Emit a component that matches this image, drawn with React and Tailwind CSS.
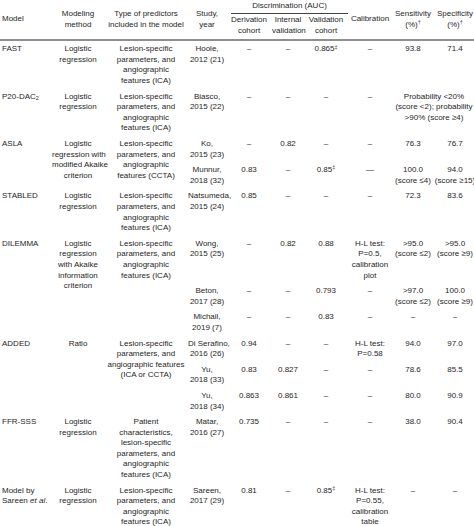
import React from 'react'

// Summary table of FFR prediction models
const head = 'font-normal text-center align-middle whitespace-pre border-b-2 border-[#8f8f8f]'
const sub = 'font-normal text-center align-top whitespace-pre pt-px pb-[3px] border-b-2 border-[#8f8f8f]'
const c = 'align-top text-center whitespace-pre pt-[3px] pb-[2px]'
const m = 'align-top text-left whitespace-pre pt-[3px] pb-[2px] pl-[2px]'

const ICA = 'Lesion-specific\nparameters, and\nangiographic\nfeatures (ICA)'
const Dag = () => <sup className="text-[5.5px]">‡</sup>

export default function App() {
  return (
    <div className="w-[474px] h-[526px] overflow-hidden bg-white text-[#262626] text-[8px] leading-[10.6px] font-['Liberation_Sans',Arial,sans-serif]">
      <table className="w-[476px] table-fixed border-collapse">
        <colgroup>
          <col className="w-[52px]" />
          <col className="w-[52px]" />
          <col className="w-[84px]" />
          <col className="w-[38px]" />
          <col className="w-[46px]" />
          <col className="w-[32px]" />
          <col className="w-[44px]" />
          <col className="w-[44px]" />
          <col className="w-[42px]" />
          <col className="w-[42px]" />
        </colgroup>
        <thead>
          <tr>
            <th rowSpan={2} className={head + ' text-left pl-[2px]'}>Model</th>
            <th rowSpan={2} className={head}>{'Modeling\nmethod'}</th>
            <th rowSpan={2} className={head}>{'Type of predictors\nincluded in the model'}</th>
            <th rowSpan={2} className={head}>{'Study,\nyear'}</th>
            <th colSpan={3} className="font-normal text-center p-0">
              <div className="ml-[5px] pt-px pb-[1.5px] border-b border-[#444]">Discrimination (AUC)</div>
            </th>
            <th rowSpan={2} className={head}>Calibration</th>
            <th rowSpan={2} className={head}>
              {'Sensitivity\n(%)'}<sup className="text-[5.5px]">†</sup>
            </th>
            <th rowSpan={2} className={head}>
              {'Specificity\n(%)'}<sup className="text-[5.5px]">†</sup>
            </th>
          </tr>
          <tr>
            <th className={sub}>{'Derivation\ncohort'}</th>
            <th className={sub}>{'Internal\nvalidation'}</th>
            <th className={sub}>{'Validation\ncohort'}</th>
          </tr>
        </thead>
        <tbody>
          {/* FAST */}
          <tr>
            <td className={m}>FAST</td>
            <td className={c}>{'Logistic\nregression'}</td>
            <td className={c}>{ICA}</td>
            <td className={c}>{'Hoole,\n2012 (21)'}</td>
            <td className={c}>–</td>
            <td className={c}>–</td>
            <td className={c}>0.865<Dag /></td>
            <td className={c}>–</td>
            <td className={c}>93.8</td>
            <td className={c}>71.4</td>
          </tr>

          {/* P20-DAC2 */}
          <tr>
            <td className={m}>P20-DAC<sub className="text-[5.5px]">2</sub></td>
            <td className={c}>{'Logistic\nregression'}</td>
            <td className={c}>{ICA}</td>
            <td className={c}>{'Biasco,\n2015 (22)'}</td>
            <td className={c}>–</td>
            <td className={c}>–</td>
            <td className={c}>–</td>
            <td className={c}>–</td>
            <td colSpan={2} className={c}>{'Probability <20%\n(score <2); probability\n>90% (score ≥4)'}</td>
          </tr>

          {/* ASLA */}
          <tr>
            <td rowSpan={2} className={m}>ASLA</td>
            <td rowSpan={2} className={c}>{'Logistic\nregression with\nmodified Akaike\ncriterion'}</td>
            <td rowSpan={2} className={c}>{'Lesion-specific\nparameters, and\nangiographic\nfeatures (CCTA)'}</td>
            <td className={c}>{'Ko,\n2015 (23)'}</td>
            <td className={c}>–</td>
            <td className={c}>0.82</td>
            <td className={c}>–</td>
            <td className={c}>–</td>
            <td className={c}>76.3</td>
            <td className={c}>76.7</td>
          </tr>
          <tr>
            <td className={c}>{'Munnur,\n2018 (32)'}</td>
            <td className={c}>0.83</td>
            <td className={c}>–</td>
            <td className={c}>0.85<Dag /></td>
            <td className={c}>—</td>
            <td className={c}>{'100.0\n(score ≤4)'}</td>
            <td className={c}>{'94.0\n(score ≥15)'}</td>
          </tr>

          {/* STABLED */}
          <tr>
            <td className={m}>STABLED</td>
            <td className={c}>{'Logistic\nregression'}</td>
            <td className={c}>{ICA}</td>
            <td className={c}>{'Natsumeda,\n2015 (24)'}</td>
            <td className={c}>0.85</td>
            <td className={c}>–</td>
            <td className={c}>–</td>
            <td className={c}>–</td>
            <td className={c}>72.3</td>
            <td className={c}>83.6</td>
          </tr>

          {/* DILEMMA */}
          <tr>
            <td rowSpan={3} className={m}>DILEMMA</td>
            <td rowSpan={3} className={c}>{'Logistic\nregression\nwith Akaike\ninformation\ncriterion'}</td>
            <td rowSpan={3} className={c}>{ICA}</td>
            <td className={c}>{'Wong,\n2015 (25)'}</td>
            <td className={c}>–</td>
            <td className={c}>0.82</td>
            <td className={c}>0.88</td>
            <td className={c}>{'H-L test:\nP=0.5,\ncalibration\nplot'}</td>
            <td className={c}>{'>95.0\n(score ≤2)'}</td>
            <td className={c}>{'>95.0\n(score ≥9)'}</td>
          </tr>
          <tr>
            <td className={c}>{'Beton,\n2017 (28)'}</td>
            <td className={c}>–</td>
            <td className={c}>–</td>
            <td className={c}>0.793</td>
            <td className={c}>–</td>
            <td className={c}>{'>97.0\n(score ≤2)'}</td>
            <td className={c}>{'100.0\n(score ≥9)'}</td>
          </tr>
          <tr>
            <td className={c}>{'Michail,\n2019 (7)'}</td>
            <td className={c}>–</td>
            <td className={c}>–</td>
            <td className={c}>0.83</td>
            <td className={c}>–</td>
            <td className={c}>–</td>
            <td className={c}>–</td>
          </tr>

          {/* ADDED */}
          <tr>
            <td rowSpan={3} className={m}>ADDED</td>
            <td rowSpan={3} className={c}>Ratio</td>
            <td rowSpan={3} className={c}>{'Lesion-specific\nparameters, and\nangiographic features\n(ICA or CCTA)'}</td>
            <td className={c}>{'Di Serafino,\n2016 (26)'}</td>
            <td className={c}>0.94</td>
            <td className={c}>–</td>
            <td className={c}>–</td>
            <td className={c}>{'H-L test:\nP=0.58'}</td>
            <td className={c}>94.0</td>
            <td className={c}>97.0</td>
          </tr>
          <tr>
            <td className={c}>{'Yu,\n2018 (33)'}</td>
            <td className={c}>0.83</td>
            <td className={c}>0.827</td>
            <td className={c}>–</td>
            <td className={c}>–</td>
            <td className={c}>78.6</td>
            <td className={c}>85.5</td>
          </tr>
          <tr>
            <td className={c}>{'Yu,\n2018 (34)'}</td>
            <td className={c}>0.863</td>
            <td className={c}>0.861</td>
            <td className={c}>–</td>
            <td className={c}>–</td>
            <td className={c}>80.0</td>
            <td className={c}>90.9</td>
          </tr>

          {/* FFR-SSS */}
          <tr>
            <td className={m}>FFR-SSS</td>
            <td className={c}>{'Logistic\nregression'}</td>
            <td className={c}>{'Patient\ncharacteristics,\nlesion-specific\nparameters, and\nangiographic\nfeatures (ICA)'}</td>
            <td className={c}>{'Matar,\n2016 (27)'}</td>
            <td className={c}>0.735</td>
            <td className={c}>–</td>
            <td className={c}>–</td>
            <td className={c}>–</td>
            <td className={c}>38.0</td>
            <td className={c}>90.4</td>
          </tr>

          {/* Sareen */}
          <tr>
            <td className={m}>
              Model by
              <br />
              Sareen <i>et al</i>.
            </td>
            <td className={c}>{'Logistic\nregression'}</td>
            <td className={c}>{ICA}</td>
            <td className={c}>{'Sareen,\n2017 (29)'}</td>
            <td className={c}>0.81</td>
            <td className={c}>–</td>
            <td className={c}>0.85<Dag /></td>
            <td className={c}>{'H-L test:\nP=0.55,\ncalibration\ntable'}</td>
            <td className={c}>–</td>
            <td className={c}>–</td>
          </tr>
        </tbody>
      </table>
    </div>
  )
}
